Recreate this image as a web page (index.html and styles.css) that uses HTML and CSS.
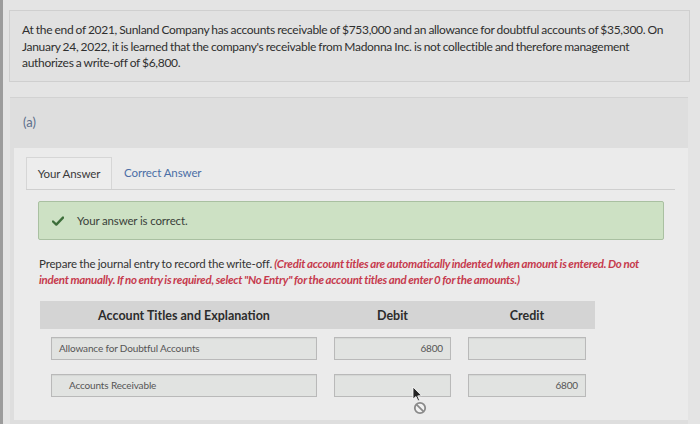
FILE: index.html
```html
<!DOCTYPE html>
<html>
<head>
<meta charset="utf-8">
<link rel="stylesheet" href="styles.css">
</head>
<body>
<div class="screen">
  <div class="question">
    At the end of 2021, Sunland Company has accounts receivable of $753,000 and an allowance for doubtful accounts of $35,300. On<br>
    January 24, 2022, it is learned that the company's receivable from Madonna Inc. is not collectible and therefore management<br>
    authorizes a write-off of $6,800.
  </div>
  <div class="part">
    <div class="part-label">(a)</div>
    <div class="panel">
      <div class="tabs">
        <div class="tab active">Your Answer</div>
        <div class="tab link">Correct Answer</div>
      </div>
      <div class="notice">
        <svg class="check" width="12" height="10" viewBox="0 0 12 10"><path d="M1 5.5 L4.3 8.6 L11 1.6" fill="none" stroke="#3d6e3a" stroke-width="2.4" stroke-linecap="round" stroke-linejoin="round"/></svg>
        <span>Your answer is correct.</span>
      </div>
      <p class="prompt">Prepare the journal entry to record the write-off. <em>(Credit account titles are automatically indented when amount is entered. Do not<br>indent manually. If no entry is required, select "No Entry" for the account titles and enter 0 for the amounts.)</em></p>
      <div class="journal">
        <div class="head">
          <div>Account Titles and Explanation</div>
          <div>Debit</div>
          <div>Credit</div>
        </div>
        <div class="row">
          <div class="field">Allowance for Doubtful Accounts</div>
          <div class="field num">6800</div>
          <div class="field num"></div>
        </div>
        <div class="row">
          <div class="field indent">Accounts Receivable</div>
          <div class="field num"></div>
          <div class="field num">6800</div>
        </div>
      </div>
    </div>
  </div>
  <svg class="cursor" width="18" height="30" viewBox="0 0 18 30">
    <path d="M2 1 L2 13 L5 10.5 L7 15 L8.6 14.3 L6.7 9.9 L10.5 9.6 Z" fill="#222" stroke="#fff" stroke-width="0.8"/>
    <circle cx="9" cy="22" r="5.2" fill="#f2f2f2" stroke="#8a8a8a" stroke-width="1.8"/>
    <path d="M5.6 18.6 L12.4 25.4" stroke="#8a8a8a" stroke-width="1.8"/>
  </svg>
</div>
</body>
</html>
```

FILE: styles.css
```css
html, body {
  margin: 0;
  padding: 0;
}
body {
  width: 700px;
  height: 424px;
  overflow: hidden;
  background: #e4e4e4;
  font-family: Lato, "Noto Sans", sans-serif;
  color: #2f2f2f;
}
.screen {
  position: relative;
  height: 424px;
  border-left: 3px solid #9c9c9c;
  box-sizing: border-box;
  padding: 10px 10px 0 6px;
}
.question {
  height: 72px;
  box-sizing: border-box;
  background: #e1e1e1;
  border: 1px solid #cfcfcf;
  padding: 11px 12px 0 12px;
  font-size: 12px;
  line-height: 16.5px;
  letter-spacing: -0.3px;
  word-spacing: -0.5px;
}
.part {
  margin-top: 15px;
  margin-left: 1px;
  margin-right: 2px;
  background: #dedede;
  border-top: 1px solid #d2d2d2;
  height: 330px;
}
.part-label {
  height: 50px;
  box-sizing: border-box;
  padding: 16px 0 0 13px;
  font-size: 13px;
  color: #5d6e8c;
}
.panel {
  margin-left: 4px;
  background: #ebebeb;
  height: 272px;
  padding-top: 9px;
  box-sizing: border-box;
}
.tabs {
  display: flex;
  align-items: flex-end;
  margin: 0 13px 0 12px;
  border-bottom: 1px solid #cfcfcf;
  height: 32px;
}
.tab {
  font-size: 11.5px;
  letter-spacing: -0.1px;
  height: 32px;
  line-height: 31px;
  box-sizing: border-box;
}
.tab.active {
  width: 86px;
  text-align: center;
  border: 1px solid #d6d6d6;
  border-bottom: none;
  background: #ededed;
  color: #3a3a3a;
}
.tab.link {
  margin-left: 12px;
  color: #4a6ea6;
}
.notice {
  margin: 11px 24px 0 24px;
  height: 39px;
  box-sizing: border-box;
  background: #cde1c4;
  border: 1px solid #a9c0a1;
  border-radius: 2px;
  display: flex;
  align-items: center;
  padding-left: 13px;
  font-size: 11.5px;
  letter-spacing: -0.15px;
  color: #3a3f3a;
}
.check {
  margin-right: 13px;
}
.prompt {
  margin: 16px 0 0 25px;
  font-size: 11.5px;
  line-height: 15.5px;
  letter-spacing: -0.15px;
  word-spacing: -0.5px;
  color: #333;
}
.prompt em {
  font-weight: bold;
  color: #c63a4d;
  letter-spacing: -0.25px;
}
.journal {
  margin: 14px 0 0 26px;
  width: 555px;
}
.head, .row {
  display: grid;
  grid-template-columns: 266px 117px 118px;
  column-gap: 17px;
  padding: 0 9px 0 11px;
}
.head {
  height: 28px;
  align-items: center;
  background: #d4d4d4;
  font-weight: bold;
  font-size: 12.5px;
  letter-spacing: 0;
  color: #2c2c2c;
  text-align: center;
}
.row {
  margin-top: 8px;
}
.row + .row {
  margin-top: 14px;
}
.field {
  height: 23px;
  box-sizing: border-box;
  background: #e1e3e1;
  border: 1px solid #b9b9b9;
  box-shadow: inset 0 1px 1px rgba(0,0,0,0.06);
  font-size: 10px;
  letter-spacing: -0.15px;
  line-height: 21px;
  padding: 0 7px;
  color: #555;
}
.field.indent {
  padding-left: 17px;
}
.field.num {
  text-align: right;
}
.cursor {
  position: absolute;
  left: 408px;
  top: 386px;
}
```
